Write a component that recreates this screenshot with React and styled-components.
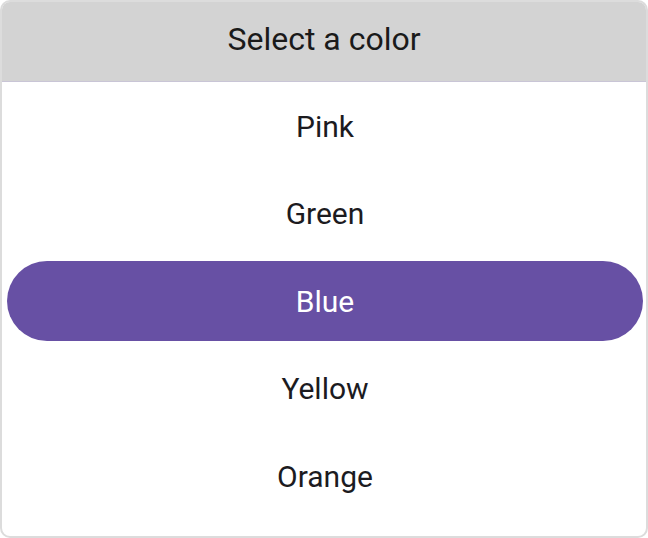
import React, { useState } from "react";
import styled, { createGlobalStyle } from "styled-components";

const GlobalStyle = createGlobalStyle`
    html, body {
        margin: 0;
        padding: 0;
        background: #ffffff;
        font-family: Roboto, "Liberation Sans", sans-serif;
    }
    * {
        box-sizing: border-box;
    }
`;

const Panel = styled.div`
    width: 648px;
    height: 538px;
    border: 2px solid #dcdcdc;
    border-radius: 10px;
    overflow: hidden;
    background-color: #ffffff;
    display: flex;
    flex-direction: column;
`;

const Header = styled.div`
    height: 80px;
    flex-shrink: 0;
    display: flex;
    align-items: center;
    justify-content: center;
    background-color: #d3d3d3;
    border-bottom: 1px solid #c9c5d6;
    color: #1a1a1a;
    font-size: 32px;
    padding-bottom: 5px;
`;

const List = styled.ul`
    list-style: none;
    margin: 0;
    padding: 0 3px 0 5px;
    display: flex;
    flex-direction: column;
`;

const Item = styled.li`
    height: 87.5px;
    display: flex;
    padding: 4px 0 3.5px;
`;

const Option = styled.button`
    flex: 1;
    border: none;
    border-radius: 40px;
    font-family: inherit;
    font-size: 30px;
    cursor: pointer;
    background-color: ${props => props.selected ? "#6750a4" : "transparent"};
    color: ${props => props.selected ? "#ffffff" : "#1c1b1f"};
`;

const colors = ["Pink", "Green", "Blue", "Yellow", "Orange"];

export default function App() {
    const [selected, setSelected] = useState("Blue");
    return (
        <>
            <GlobalStyle />
            <Panel>
                <Header>Select a color</Header>
                <List>
                    {colors.map(color => (
                        <Item key={color}>
                            <Option
                                selected={selected === color}
                                onClick={() => setSelected(color)}
                            >
                                {color}
                            </Option>
                        </Item>
                    ))}
                </List>
            </Panel>
        </>
    );
}
